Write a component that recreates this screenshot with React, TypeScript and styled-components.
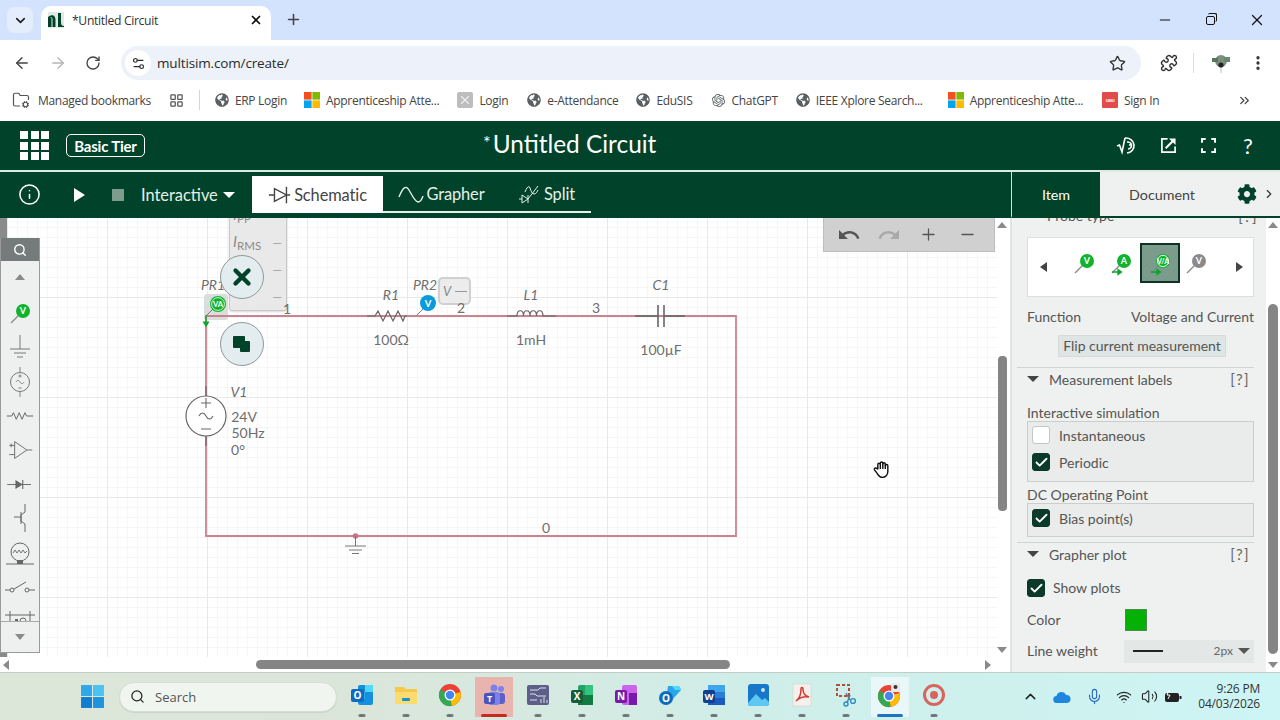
import React from 'react';
import styled, { createGlobalStyle } from 'styled-components';
import { ArrowLeft, ArrowRight, RotateCw, Star, Puzzle, EllipsisVertical, Minus, X, Plus, ChevronDown, ChevronUp, ChevronRight, Search, Settings2, LayoutGrid, FolderCog, ChevronsRight, Mic, Wifi, Volume2, Info, Check } from 'lucide-react';
import { FaGlobeAmericas, FaCog } from 'react-icons/fa';
import { SiOpenai } from 'react-icons/si';
import { MdUndo, MdRedo } from 'react-icons/md';

const GREEN = '#00432a';
const UI = `"Open Sans", "Noto Sans", sans-serif`;
const APP = `Lato, "Open Sans", sans-serif`;

const Global = createGlobalStyle`
  html, body { margin: 0; padding: 0; width: 1280px; height: 720px; overflow: hidden; background: #fff; }
  * { box-sizing: border-box; }
  #root { width: 1280px; height: 720px; }
`;

const Page = styled.div`
  width: 1280px; height: 720px; display: flex; flex-direction: column; overflow: hidden;
  font-family: ${APP}; color: #555;
`;

/* ---------- browser ---------- */
const TabStrip = styled.div`
  height: 40px; background: #d3e3fd; display: flex; align-items: flex-end; padding-left: 7px; color: #1f1f1f;
`;
const TabSearch = styled.div`
  width: 26px; height: 26px; margin-bottom: 7px; border-radius: 8px; background: #e4edfb;
  display: flex; align-items: center; justify-content: center;
`;
const BrowserTab = styled.div`
  width: 230px; height: 34px; margin-left: 8px; background: #fff; border-radius: 10px 10px 0 0;
  display: flex; align-items: center; padding: 0 8px 6px 7px; font: 12.2px ${UI}; color: #333;
`;
const TabTitle = styled.span` margin-left: 8px; flex: 1; letter-spacing: -0.35px; `;
const NewTab = styled.div` margin: 0 0 12px 14px; display: flex; `;
const WindowControls = styled.div`
  margin: 0 14px 11px auto; display: flex; gap: 32px; align-items: center;
`;
const Restore = styled.div`
  width: 9px; height: 9px; border: 1.3px solid #111; border-radius: 2px; position: relative; margin: 0 1px;
  &::after { content: ''; position: absolute; left: 1px; top: -3.5px; width: 8px; height: 8px;
    border-top: 1.3px solid #111; border-right: 1.3px solid #111; border-radius: 2px; }
`;
const Toolbar = styled.div`
  height: 40px; background: #fff; display: flex; align-items: center; padding: 6px 10px 0 13px; color: #444;
  border-radius: 8px 8px 0 0;
`;
const NavGroup = styled.div` display: flex; gap: 18px; align-items: center; `;
const Address = styled.div`
  margin-left: 20px; width: 1020px; height: 34px; border-radius: 17px; background: #edf2fa;
  display: flex; align-items: center; padding: 0 15px 0 3px; font: 13.5px ${UI}; color: #2a2a2a;
`;
const TuneBubble = styled.div`
  width: 26px; height: 26px; border-radius: 50%; background: #fff; display: flex; align-items: center; justify-content: center; margin-right: 6px; margin-left: 1px;
`;
const Url = styled.span` flex: 1; letter-spacing: -0.15px; `;
const ToolEnd = styled.div` display: flex; align-items: center; margin-left: 19px; `;
const Sep = styled.div` width: 1px; height: 20px; background: #d5dfeb; margin: 0 16px 0 15px; `;
const Avatar = styled.svg` width: 22px; height: 22px; margin-right: 17px; `;
const Bookmarks = styled.div`
  height: 40px; background: #fff; display: flex; align-items: center; padding-left: 12px; position: relative;
  font: 12px ${UI}; color: #444;
`;
const Bookmark = styled.div<{ $gap?: number; $icon?: number }>`
  display: flex; align-items: center; gap: ${p => p.$icon ?? 6}px; margin-right: ${p => p.$gap ?? 18}px; white-space: nowrap; letter-spacing: -0.3px;
`;
const BmSep = styled.div` width: 1px; height: 20px; background: #c9d6e4; margin: 0 15px 0 15px; `;
const BmMore = styled.div` margin-left: auto; margin-right: 28px; display: flex; `;
const SignInIcon = styled.div`
  width: 16px; height: 16px; background: #e34b4b; border-radius: 1px; color: #fff; font: bold 4px ${UI};
  display: flex; align-items: center; justify-content: center;
`;
const XFav = styled.div`
  width: 16px; height: 16px; background: #bdbdbd; border-radius: 2px; display: flex; align-items: center; justify-content: center; color: #eee;
`;

/* ---------- app bars ---------- */
const AppHeader = styled.header`
  height: 51px; background: ${GREEN}; color: #fff; display: flex; align-items: center; margin-top: 1px;
  border-bottom: 2px solid #dcebe3; padding: 0 20px; position: relative;
`;
const AppsGrid = styled.div`
  display: grid; grid-template-columns: repeat(3, 8px); grid-auto-rows: 8px; gap: 2.5px; width: 29px;
  & > i { background: #fff; display: block; }
`;
const TierBadge = styled.div`
  margin-left: 17px; height: 23px; width: 79px; border: 1.5px solid #fff; border-radius: 5px; font: 700 15px ${APP};
  display: flex; align-items: center; justify-content: center; letter-spacing: -0.2px;
`;
const CircuitTitle = styled.div`
  margin: 0 0 5px 338px; font: 24.4px ${APP}; white-space: nowrap;
  & > small { font-size: 18px; vertical-align: 4px; margin-right: 2px; }
`;
const HeaderIcons = styled.div`
  margin-left: auto; display: flex; align-items: center; gap: 16px; color: #fff; font: 22px ${APP}; padding-bottom: 1px;
`;
const HeaderIcon = styled.div` width: 24px; display: flex; justify-content: center; `;
const ModeBar = styled.div`
  height: 46px; display: flex; background: ${GREEN}; position: relative;
`;
const ModeLeft = styled.div`
  width: 1010px; display: flex; align-items: flex-start; color: #fff; padding-left: 18px;
  padding-top: 4px;
`;
const PlainBtn = styled.div<{ $ml: number }>`
  height: 37px; display: flex; align-items: center; margin-left: ${p => p.$ml}px;
`;
const PlayTri = styled.div`
  width: 0; height: 0; border-left: 11px solid #fff; border-top: 7.5px solid transparent; border-bottom: 7.5px solid transparent;
`;
const StopSq = styled.div` width: 12px; height: 12px; background: #7d9c8e; `;
const ModeSelect = styled.div`
  height: 37px; display: flex; align-items: center; gap: 5px; margin-left: 17px; font: 16.4px ${APP}; width: 111px;
  color: #e6efe9;
`;
const Caret = styled.div<{ $c?: string; $w?: number }>`
  width: 0; height: 0; border-left: ${p => p.$w ?? 6}px solid transparent; border-right: ${p => p.$w ?? 6}px solid transparent;
  border-top: ${p => (p.$w ?? 6) * 1.1}px solid ${p => p.$c ?? '#fff'};
`;
const ViewTabs = styled.div`
  display: flex; height: 37px; border-bottom: 2px solid #e9f0ec; width: 339px;
`;
const ViewTab = styled.div<{ $active?: boolean; $w: number }>`
  width: ${p => p.$w}px; height: ${p => p.$active ? 37 : 35}px; display: flex; align-items: center; justify-content: center; gap: 2px;
  background: ${p => p.$active ? '#fff' : 'transparent'}; color: ${p => p.$active ? '#444' : '#e6efe9'};
  font: 16.4px ${APP}; letter-spacing: -0.1px;
`;
const PanelTabs = styled.div`
  width: 269px; margin-left: 1px; height: 46px; background: #eef1f0; display: flex; align-items: center; border-bottom: 2px solid ${GREEN};
  border-left: 1px solid #d5e3dc; position: relative; color: #444;
`;
const PanelTab = styled.div<{ $active?: boolean; $w: number }>`
  width: ${p => p.$w}px; height: 100%; display: flex; align-items: center; justify-content: center; font: 14.3px ${APP};
  background: ${p => p.$active ? GREEN : 'transparent'}; color: ${p => p.$active ? '#fff' : '#444'};
`;
const GearArea = styled.div`
  margin-left: 13px; display: flex; align-items: center; gap: 5px; color: ${GREEN};
`;

/* ---------- workspace ---------- */
const Workspace = styled.div` flex: 1; display: flex; min-height: 0; background: #dfe5e2; `;
const CanvasArea = styled.div` width: 1010px; display: flex; flex-direction: column; background: #fff; `;
const CanvasRow = styled.div` flex: 1; display: flex; min-height: 0; `;
const Canvas = styled.div`
  width: 997px; position: relative; overflow: hidden;
  background-color: #fff;
  background-image:
    linear-gradient(to right, #e9e9e9 1px, transparent 1px),
    linear-gradient(to bottom, #e9e9e9 1px, transparent 1px),
    linear-gradient(to right, #f6f6f6 1px, transparent 1px),
    linear-gradient(to bottom, #f6f6f6 1px, transparent 1px);
  background-size: 100px 100px, 100px 100px, 10px 10px, 10px 10px;
  background-position: 7px 79px, 7px 79px, 7px 79px, 7px 79px;
`;
const Tri = styled.div<{ $dir: 'up' | 'down' | 'left' | 'right'; $s?: number; $c?: string }>`
  width: 0; height: 0; flex: none;
  ${p => {
    const s = p.$s ?? 5; const c = p.$c ?? '#8a8a8a'; const t = `${s}px solid transparent`; const f = `${s * 1.3}px solid ${c}`;
    if (p.$dir === 'up') return `border-left:${t};border-right:${t};border-bottom:${f};`;
    if (p.$dir === 'down') return `border-left:${t};border-right:${t};border-top:${f};`;
    if (p.$dir === 'left') return `border-top:${t};border-bottom:${t};border-right:${f};`;
    return `border-top:${t};border-bottom:${t};border-left:${f};`;
  }}
`;
const VScroll = styled.div`
  width: 13px; display: flex; flex-direction: column; align-items: center; padding: 4px 3px 4px 0;
`;
const VThumb = styled.div`
  width: 9px; height: 155px; margin-top: 128px; border-radius: 4px; background: #858585;
`;
const Push = styled.div` margin-top: auto; `;
const HScroll = styled.div`
  height: 15px; display: flex; align-items: center; padding: 0 19px 0 3px; background: #fff;
`;
const HThumb = styled.div`
  margin-left: 247px; width: 474px; height: 9px; border-radius: 4.5px; background: #858585; margin-right: auto;
`;
const Wires = styled.svg`
  position: absolute; left: 0; top: 0; width: 997px; height: 439px;
`;
const Label = styled.div<{ $x: number; $y: number; $it?: boolean; $s?: number }>`
  position: absolute; left: ${p => p.$x}px; top: ${p => p.$y - 219}px; transform: translate(-50%, -50%);
  font: ${p => p.$it ? 'italic' : 'normal'} ${p => p.$s ?? 14}px ${APP}; color: #6e6e6e; white-space: nowrap;
`;
const MeterCard = styled.div`
  position: absolute; left: 229px; top: -6px; width: 58px; height: 99px; background: #e9e9e9; border: 1px solid #c9c9c9; border-radius: 0 0 3px 3px;
  font: italic 15px ${APP}; color: #8a8a8a; display: flex; flex-direction: column; padding: 0 3px;
  box-shadow: 0 1px 2px rgba(0,0,0,.15);
`;
const MeterRow = styled.div`
  height: 27px; display: flex; align-items: center; justify-content: space-between;
  &:first-child { height: 16px; transform: translateY(-5px); }
  & > span { transform: translateY(-2px); }
  & > b { font-weight: 400; font-style: normal; font-size: 12px; color: #9a9a9a; padding-right: 1px; }
  & sub { font-style: normal; font-size: 11.5px; vertical-align: -3px; line-height: 0; }
`;
const RoundBtn = styled.div<{ $x: number; $y: number }>`
  position: absolute; left: ${p => p.$x - 22}px; top: ${p => p.$y - 218 - 22}px; width: 44px; height: 44px; border-radius: 50%;
  background: #e3edef; border: 1px solid #8f9a9a; display: flex; align-items: center; justify-content: center; color: ${GREEN};
`;
const Squares = styled.div`
  width: 12px; height: 12px; position: relative; background: ${GREEN}; border-radius: 1px; transform: translate(-3px, -2px);
  &::after { content: ''; position: absolute; left: 7px; top: 5px; width: 10px; height: 11px; background: ${GREEN}; border-radius: 1px; }
`;
const ProbeBox = styled.div`
  position: absolute; left: 438px; top: 59px; width: 33px; height: 28px; background: #ececec; border: 2px solid #d0d0d0; border-radius: 5px;
  font: italic 13px ${APP}; color: #8a8a8a; display: flex; align-items: center; padding-left: 3px; gap: 4px;
  & > i { width: 12px; height: 1px; background: #999; display: block; }
`;
const SelectHalo = styled.div`
  position: absolute; left: 204px; top: 76px; width: 24px; height: 26px; background: #d9dddb; border-radius: 3px;
`;
const UndoBar = styled.div`
  position: absolute; left: 823px; top: 0; width: 172px; height: 34px; background: #d0d0d0; border: 1px solid #bdbdbd; border-top: none;
  display: flex; align-items: center; gap: 15.5px; padding-left: 13px; color: #555;
`;
const UndoSlot = styled.div<{ $dim?: boolean }>` width: 24px; display: flex; justify-content: center; color: ${p => p.$dim ? '#a9a9a9' : '#555'}; `;
const Palette = styled.aside`
  position: absolute; left: 0; top: 20px; width: 40px; height: 415px; background: #eef0f0; border: 1px solid #9a9a9a; border-left-width: 1px; border-top: none;
  display: flex; flex-direction: column; overflow: hidden;
`;
const PaletteSearch = styled.div`
  height: 23px; background: #757b7b; color: #fff; display: flex; align-items: center; justify-content: center; flex: none;
`;
const PaletteUp = styled.div` height: 32px; display: flex; align-items: center; justify-content: center; flex: none; `;
const PaletteList = styled.div`
  height: 328px; flex: none; overflow: hidden; display: flex; flex-direction: column; align-items: center; padding-top: 2px;
`;
const PaletteItem = styled.div<{ $h: number }>`
  height: ${p => p.$h}px; flex: none; display: flex; align-items: center; justify-content: center; width: 100%;
`;
const PaletteDown = styled.div`
  flex: 1; display: flex; align-items: center; justify-content: center; border-top: 1px solid #aaa; background: #eef0f0;
`;
const EdgeStrip = styled.div<{ $top: number; $h: number }>`
  position: absolute; left: 0; top: ${p => p.$top}px; width: 7px; height: ${p => p.$h}px; background: #8a8a8a;
`;
const HandCursor = styled.div` position: absolute; left: 872px; top: 241px; display: flex; `;

/* ---------- side panel ---------- */
const Panel = styled.div`
  width: 268px; margin-left: 2px; background: #eef1f0; display: flex; position: relative;
`;
const PanelBody = styled.div`
  width: 254px; padding: 0 0 0 15px; overflow: hidden; font: 14px ${APP}; color: #555;
`;
const PanelScroll = styled.div`
  width: 14px; background: #fff; display: flex; flex-direction: column; align-items: center; padding: 4px 1px 4px 1px;
`;
const PanelThumb = styled.div` width: 10px; height: 350px; margin-top: 76px; border-radius: 5px; background: #858585; `;
const ProbeHeading = styled.div`
  height: 16px; margin: -10px 8px 0 20px; display: flex; justify-content: space-between; line-height: 16px;
`;
const Carousel = styled.div`
  width: 227px; height: 60px; margin-top: 13px; background: #fff; border: 1px solid #dcdfde; display: flex; align-items: center; padding: 0 10px 0 12px;
`;
const CarouselCell = styled.div<{ $sel?: boolean; $ml?: number }>`
  width: 40px; height: 40px; display: flex; align-items: center; justify-content: center; flex: none; margin: -8px 0 0 ${p => p.$ml ?? 0}px;
  ${p => p.$sel ? `background:#7b9b8c;border:2px solid #0e3325;` : ''}
`;
const CarouselEnd = styled.div` margin-left: auto; display: flex; `;
const PropRow = styled.div<{ $mt: number }>`
  width: 227px; margin-top: ${p => p.$mt}px; height: 18px; display: flex; justify-content: space-between; align-items: center; line-height: 18px;
  white-space: nowrap;
`;
const FlipBtn = styled.div`
  width: 168px; height: 22px; margin: 9px 0 0 31px; background: #dfe5e4; border: 1px solid #d5dbda; display: flex; align-items: center; justify-content: center; border-radius: 1px; padding-bottom: 2px;
`;
const SectionHead = styled.div<{ $mt: number }>`
  margin: ${p => p.$mt}px 0 0 -10px; width: 237px; border-top: 1px solid #cfd5d3; display: flex; align-items: center; padding: 0 4px 2px 10px; height: 25px;
`;
const SectionTitle = styled.span` margin-left: 10px; flex: 1; `;
const Help = styled.span` font-size: 15px; color: #666; letter-spacing: 1.3px; `;
const CheckGroup = styled.div<{ $h: number; $pt: number }>`
  width: 227px; height: ${p => p.$h}px; background: #e9eceb; border: 1px solid #c9cecd; display: flex; flex-direction: column; gap: 7px; padding: ${p => p.$pt}px 0 0 4px;
`;
const CheckRow = styled.div<{ $gap?: number }>` display: flex; align-items: center; gap: ${p => p.$gap ?? 9}px; height: 20px; white-space: nowrap; `;
const CheckBox = styled.div<{ $on?: boolean }>`
  width: 18px; height: 18px; border-radius: 3px; flex: none; display: flex; align-items: center; justify-content: center;
  background: ${p => p.$on ? '#0b3a2a' : '#fff'}; border: 1px solid ${p => p.$on ? '#0b3a2a' : '#c2c6c5'}; color: #fff;
`;
const CapLabel = styled.div<{ $mt: number }>` margin-top: ${p => p.$mt}px; height: 16px; line-height: 16px; white-space: nowrap; `;
const Swatch = styled.div` width: 22px; height: 22px; background: #06b106; border: 1px solid #4a8a4a; margin-right: 107px; `;
const WeightSelect = styled.div`
  width: 130px; height: 23px; background: #e3e7e6; display: flex; align-items: center; padding: 0 4px 0 9px; font-size: 12px; color: #666; gap: 5px;
  & > i { width: 30px; height: 2px; background: #222; display: block; margin-right: auto; }
`;

/* ---------- taskbar ---------- */
const Taskbar = styled.footer`
  height: 48px; flex: none; display: flex; align-items: center; position: relative;
  background: linear-gradient(90deg, #dce6d9 0%, #dbe6da 28%, #cfeee9 60%, #cdf5f5 100%);
  border-top: 1px solid #c3ccc5; padding-left: 80px;
`;
const StartBtn = styled.svg` width: 25px; height: 25px; flex: none; `;
const SearchPill = styled.div`
  width: 218px; height: 30px; margin-left: 14px; border-radius: 15px; background: #f0f6ef; border: 1px solid #d5dcd5; display: flex; align-items: center; gap: 10px; padding-left: 10px;
  font: 13px ${UI}; color: #555; box-shadow: 0 1px 1px rgba(0,0,0,.08);
`;
const TaskApps = styled.div` display: flex; margin-left: 3px; `;
const TaskApp = styled.div<{ $bg?: string; $bar?: string }>`
  width: 44px; height: 40px; display: flex; align-items: center; justify-content: center; position: relative; padding-bottom: 3px;
  background: ${p => p.$bg ? `linear-gradient(${p.$bg}, ${p.$bg}) center / 38px 100% no-repeat` : 'transparent'};
  &::after { content: ''; position: absolute; left: 50%; bottom: 0; transform: translateX(-50%);
    width: ${p => p.$bar ? '26px' : '7px'}; height: 3px; border-radius: 2px; background: ${p => p.$bar ?? '#70787a'}; }
`;
const Tray = styled.div` margin-left: auto; display: flex; align-items: center; color: #222; padding-right: 20px; `;
const TrayIcon = styled.div<{ $w: number }>` width: ${p => p.$w}px; display: flex; justify-content: center; `;
const Clock = styled.div`
  margin: -2px 0 0 12px; text-align: right; font: 12px/15px ${UI}; letter-spacing: -0.2px; color: #333;
`;

/* ---------- drawings ---------- */
const MsLogo = () => (
  <svg width="16" height="16" viewBox="0 0 16 16"><rect width="7.6" height="7.6" fill="#f25022"/><rect x="8.4" width="7.6" height="7.6" fill="#7fba00"/><rect y="8.4" width="7.6" height="7.6" fill="#00a4ef"/><rect x="8.4" y="8.4" width="7.6" height="7.6" fill="#ffb900"/></svg>
);
const Globe = () => <FaGlobeAmericas size={14} color="#5a5f63" />;
const NiLogo = () => (
  <svg width="16" height="16" viewBox="0 0 16 16"><rect width="16" height="16" fill="#dfeae4"/><path d="M0 6h3.5v9H0zM0 5c4-3 7.5-2 7.5 3v7H4.5V7C4.5 5 2.5 5 0 7zM10 1h3v14h-3z" fill="#00432a"/><path d="M13 10c0 3 1 4 3 4v1h-3z" fill="#00432a"/></svg>
);
const ProbeGlyph = ({ fill, letter, arrow, ring }: { fill: string; letter: string; arrow?: boolean; ring?: boolean }) => (
  <svg width="26" height="26" viewBox="0 0 26 26">
    <line x1="4" y1="23" x2="12" y2="15" stroke="#888" strokeWidth="1.2" />
    <circle cx="16" cy="11" r="7" fill={fill} />
    {ring && <circle cx="16" cy="11" r="5.6" fill="none" stroke="#fff" strokeWidth="0.9" />}
    <text x="16" y="14" textAnchor="middle" fontFamily="Lato" fontWeight="700" fontSize={ring ? 7 : 9} fill="#fff">{letter}</text>
    {arrow && <path d="M4 22h9M10 19.5l3.5 2.5-3.5 2.5z" stroke="#0aa52c" strokeWidth="1.3" fill="#0aa52c" />}
  </svg>
);
const Resistor = () => <svg width="28" height="10" viewBox="0 0 34 12"><path d="M1 6h6l2-4 3.5 8 3.5-8 3.5 8 3.5-8 2 4h8" fill="none" stroke="#666" strokeWidth="1.2"/></svg>;
const OpAmp = () => <svg width="26" height="24" viewBox="0 0 34 30"><path d="M10 4v22l16-11zM26 15h7M3 9h7M3 21h7M5.5 6.5v5" fill="none" stroke="#666" strokeWidth="1.2"/></svg>;
const Diode = () => <svg width="28" height="11" viewBox="0 0 30 12"><path d="M1 6h26" stroke="#666" strokeWidth="1"/><path d="M10 1v10l8-5z" fill="#666"/><path d="M18 1v10" stroke="#666" strokeWidth="1.2"/></svg>;
const Bjt = () => <svg width="14" height="30" viewBox="0 0 14 30"><path d="M1 14h7M12 1v8l-4 3v6l4 3v8M8 9v12" fill="none" stroke="#666" strokeWidth="1"/></svg>;
const Lamp = () => <svg width="30" height="24" viewBox="0 0 30 24"><circle cx="15" cy="10" r="9" fill="none" stroke="#666" strokeWidth="1"/><path d="M8 11l2-3 2 3 2-3 2 3 2-3 2 3 2-2" fill="none" stroke="#666" strokeWidth="0.9"/><path d="M1 22h28" stroke="#666" strokeWidth="1"/><rect x="12" y="18" width="6" height="4" fill="#666"/></svg>;
const Switch = () => <svg width="30" height="14" viewBox="0 0 30 14"><path d="M0 10h5M9 9l12-7M24 10h6" stroke="#666" strokeWidth="1" fill="none"/><circle cx="7" cy="10" r="2" fill="none" stroke="#666"/><circle cx="22" cy="10" r="2" fill="none" stroke="#666"/></svg>;
const Relay = () => <svg width="30" height="14" viewBox="0 0 30 14"><path d="M0 4h30M5 0v14M25 0v14" stroke="#666" strokeWidth="1" fill="none"/><circle cx="18" cy="10" r="3" fill="none" stroke="#666"/><rect x="10" y="8" width="3" height="3" fill="#666"/></svg>;
const GroundSym = () => <svg width="22" height="26" viewBox="0 0 22 26"><path d="M11 0v14M1 14h20M5 18h12M8 22h6" stroke="#777" strokeWidth="1" fill="none"/></svg>;
const SourceSym = () => <svg width="22" height="30" viewBox="0 0 22 30"><circle cx="11" cy="15" r="9.5" fill="none" stroke="#777"/><path d="M11 0v5.5M11 24.5V30M7 15c1.4-2.2 2.8-2.2 4 0s2.6 2.2 4 0M9.4 9h3.2M11 7.4v3.2M9.4 21h3.2" stroke="#777" strokeWidth="0.9" fill="none"/></svg>;

const Circuit = () => (
  <Wires viewBox="0 218 997 439">
    <path d="M206 316H736V536H206Z" fill="none" stroke="#c9848f" strokeWidth="1.8" />
    {/* R1 */}
    <path d="M367 316h8l3-5 5 10 5-10 5 10 5-10 5 10 2-5h2" fill="none" stroke="#666" strokeWidth="1.2" />
    <line x1="417" y1="315" x2="423" y2="309" stroke="#777" strokeWidth="1" />
    <circle cx="428" cy="303" r="8" fill="#0a9bdc" />
    <text x="428" y="307" textAnchor="middle" fontFamily="Lato" fontSize="9.5" fontWeight="700" fill="#fff">V</text>
    {/* L1 */}
    <path d="M507 316h10c0-7 6.5-7 6.5 0 0-7 6.5-7 6.5 0 0-7 6.5-7 6.5 0 0-7 6.5-7 6.5 0h13" fill="none" stroke="#666" strokeWidth="1.2" />
    {/* C1 */}
    <path d="M635 316h23M664 316h21M658 305v22M664 305v22" fill="none" stroke="#666" strokeWidth="1.6" />
    {/* V1 */}
    <circle cx="206" cy="416" r="20" fill="#fff" stroke="#666" strokeWidth="1.2" />
    <path d="M206 386v10M206 436v10" stroke="#666" strokeWidth="1.2" />
    <path d="M201 403h10M206 398v10M201 429h10M199 416c2-4 5-4 7 0s5 4 7 0" fill="none" stroke="#666" strokeWidth="1.1" />
    {/* ground */}
    <circle cx="355.5" cy="536" r="2.8" fill="#c9748a" />
    <path d="M355.5 536v10M345 546h21M349 550h13M352 553.5h7" stroke="#777" strokeWidth="1" fill="none" />
    {/* PR1 */}
    <line x1="206" y1="316" x2="213" y2="309" stroke="#777" strokeWidth="1" />
    <path d="M206 316v7" stroke="#10a52b" strokeWidth="1.4" />
    <path d="M202.5 321.5h7l-3.5 6z" fill="#10a52b" />
    <circle cx="218" cy="304" r="8" fill="#0fb32d" />
    <circle cx="218" cy="304" r="6.4" fill="none" stroke="#fff" strokeWidth="0.8" />
    <text x="218" y="307" textAnchor="middle" fontFamily="Lato" fontSize="7.5" fontWeight="700" fill="#fff">VA</text>
  </Wires>
);

const TaskIcons = [
  <svg width="24" height="24" viewBox="0 0 24 24" key="o"><rect x="8" y="2" width="15" height="20" rx="2" fill="#1490df"/><rect x="15" y="2" width="8" height="7" fill="#50d9ff"/><rect x="8" y="9" width="7" height="7" fill="#28a8ea"/><rect x="1" y="6" width="13" height="13" rx="2" fill="#0f6cbd"/><text x="7.5" y="16" textAnchor="middle" fill="#fff" fontSize="10" fontWeight="700" fontFamily="Open Sans">O</text></svg>,
  <svg width="24" height="24" viewBox="0 0 24 24" key="f"><path d="M1 4h9l2 2h11v15H1z" fill="#f7c948"/><path d="M1 9h22v12H1z" fill="#fcdc6e"/><rect x="8" y="15" width="8" height="3" rx="1" fill="#1490df"/></svg>,
  <svg width="24" height="24" viewBox="0 0 24 24" key="c"><circle cx="12" cy="12" r="11" fill="#ea4335"/><path d="M12 12L22.5 9a11 11 0 0 1-9 14z" fill="#fbbc04"/><path d="M12 12L13.5 23A11 11 0 0 1 2.5 6.5z" fill="#34a853"/><circle cx="12" cy="12" r="5.5" fill="#fff"/><circle cx="12" cy="12" r="4.2" fill="#4285f4"/></svg>,
  <svg width="24" height="24" viewBox="0 0 24 24" key="t"><circle cx="19" cy="6" r="3" fill="#7b83eb"/><circle cx="12" cy="5" r="3.5" fill="#7b83eb"/><rect x="15" y="10" width="8" height="11" rx="3" fill="#5b5fc7"/><rect x="6" y="9" width="12" height="13" rx="3" fill="#7b83eb"/><rect x="2" y="10" width="11" height="11" rx="2" fill="#4b53bc"/><text x="7.5" y="19" textAnchor="middle" fill="#fff" fontSize="9" fontWeight="700" fontFamily="Open Sans">T</text></svg>,
  <svg width="24" height="24" viewBox="0 0 24 24" key="cb"><rect x="1" y="2" width="22" height="20" rx="2" fill="#5c5f87"/><path d="M4 7h8l2-2h6M4 11h5l2 2h9M4 17h7M15 20v-4M18 20v-6M21 20v-3" stroke="#dfe0ea" strokeWidth="1" fill="none"/></svg>,
  <svg width="24" height="24" viewBox="0 0 24 24" key="x"><rect x="8" y="2" width="15" height="20" rx="2" fill="#21a366"/><rect x="15" y="2" width="8" height="10" fill="#33c481"/><rect x="8" y="12" width="15" height="10" fill="#107c41"/><rect x="1" y="7" width="12" height="13" rx="2" fill="#185c37"/><text x="7" y="17" textAnchor="middle" fill="#fff" fontSize="10" fontWeight="700" fontFamily="Open Sans">X</text></svg>,
  <svg width="24" height="24" viewBox="0 0 24 24" key="n"><rect x="8" y="2" width="15" height="20" rx="2" fill="#ca64ea"/><rect x="15" y="10" width="8" height="12" fill="#7719aa"/><rect x="1" y="7" width="12" height="13" rx="2" fill="#7719aa"/><text x="7" y="17" textAnchor="middle" fill="#fff" fontSize="10" fontWeight="700" fontFamily="Open Sans">N</text></svg>,
  <svg width="24" height="24" viewBox="0 0 24 24" key="o2"><path d="M10 3h11l2 4-9 10H8z" fill="#28a8ea"/><path d="M14 3h7l2 4h-6z" fill="#50d9ff"/><circle cx="8" cy="15" r="7" fill="#0f6cbd"/><text x="8" y="19" textAnchor="middle" fill="#fff" fontSize="10" fontWeight="700" fontFamily="Open Sans">O</text></svg>,
  <svg width="24" height="24" viewBox="0 0 24 24" key="w"><rect x="6" y="2" width="17" height="20" rx="2" fill="#2b7cd3"/><rect x="6" y="2" width="17" height="7" fill="#41a5ee"/><rect x="6" y="15" width="17" height="7" fill="#185abd"/><rect x="1" y="7" width="12" height="13" rx="2" fill="#103f91"/><text x="7" y="17" textAnchor="middle" fill="#fff" fontSize="9.5" fontWeight="700" fontFamily="Open Sans">W</text></svg>,
  <svg width="24" height="24" viewBox="0 0 24 24" key="p"><rect x="2" y="1" width="21" height="22" rx="3" fill="#1877c9"/><path d="M2 20l8-9 6 6 3-2 4 4v1a3 3 0 0 1-3 3H5a3 3 0 0 1-3-3z" fill="#5ec8f2"/><circle cx="17" cy="7" r="2" fill="#bfe9fb"/></svg>,
  <svg width="24" height="24" viewBox="0 0 24 24" key="pdf"><rect x="3" y="1" width="18" height="22" fill="#f5f0ee" stroke="#d8d0cc" strokeWidth="0.6"/><path d="M6 18c3-2 5-7 5-12 0-2 2-2 2 0 0 5 2 7 6 8-5-1-9 0-13 4z" fill="none" stroke="#d13a2a" strokeWidth="1.5"/></svg>,
  <svg width="24" height="24" viewBox="0 0 24 24" key="s"><rect x="3" y="2" width="12" height="11" fill="none" stroke="#b84a3a" strokeWidth="2" strokeDasharray="3 2"/><path d="M12 10l4 7M16 12l-3 8" stroke="#4e7f9a" strokeWidth="1.5"/><circle cx="19" cy="18" r="2.4" fill="none" stroke="#2e8cc0" strokeWidth="1.4"/><circle cx="12" cy="21" r="2" fill="none" stroke="#2e8cc0" strokeWidth="1.4"/></svg>,
  <svg width="26" height="26" viewBox="0 0 26 26" key="c2"><circle cx="12" cy="14" r="11" fill="#ea4335"/><path d="M12 14L22.5 11a11 11 0 0 1-9 14z" fill="#fbbc04"/><path d="M12 14L13.5 25A11 11 0 0 1 2.5 8.5z" fill="#34a853"/><circle cx="12" cy="14" r="5.5" fill="#fff"/><circle cx="12" cy="14" r="4.2" fill="#4285f4"/><rect x="14" y="1" width="9" height="9" rx="1.5" fill="#e9e9e9"/><circle cx="18.5" cy="5" r="2" fill="#333"/></svg>,
  <svg width="24" height="24" viewBox="0 0 24 24" key="r"><circle cx="12" cy="12" r="9.5" fill="none" stroke="#d9645f" strokeWidth="3"/><circle cx="12" cy="12" r="4" fill="#d9645f"/></svg>,
];

const palette: [number, React.ReactNode][] = [
  [36, <ProbeGlyph fill="#0fb32d" letter="V" />],
  [34, <GroundSym />],
  [34, <SourceSym />],
  [34, <Resistor />],
  [34, <OpAmp />],
  [34, <Diode />],
  [34, <Bjt />],
  [38, <Lamp />],
  [27, <Switch />],
  [36, <Relay />],
];

export default function App() {
  return (
    <Page>
      <Global />
      <TabStrip>
        <TabSearch><ChevronDown size={15} strokeWidth={2.6} /></TabSearch>
        <BrowserTab>
          <NiLogo />
          <TabTitle>*Untitled Circuit</TabTitle>
          <X size={14} strokeWidth={3} color="#111" />
        </BrowserTab>
        <NewTab><Plus size={17} strokeWidth={2.2} color="#444" /></NewTab>
        <WindowControls>
          <Minus size={16} strokeWidth={1.6} color="#111" />
          <Restore />
          <X size={18} strokeWidth={1.6} color="#111" />
        </WindowControls>
      </TabStrip>
      <Toolbar>
        <NavGroup>
          <ArrowLeft size={18} strokeWidth={1.9} />
          <ArrowRight size={18} strokeWidth={1.7} color="#b2b5b8" />
          <RotateCw size={16} strokeWidth={2} />
        </NavGroup>
        <Address>
          <TuneBubble><Settings2 size={15} strokeWidth={1.9} /></TuneBubble>
          <Url>multisim.com/create/</Url>
          <Star size={17} strokeWidth={1.9} color="#333" />
        </Address>
        <ToolEnd>
          <Puzzle size={18} strokeWidth={1.9} color="#333" />
          <Sep />
          <Avatar viewBox="0 0 22 22">
            <circle cx="11" cy="9" r="6" fill="#79917e" /><rect x="2" y="6" width="6" height="4" fill="#55775d" /><rect x="14" y="5" width="6" height="5" fill="#6b8770" /><circle cx="11" cy="13" r="2.6" fill="#222" /><path d="M11 16v5" stroke="#bbb" />
          </Avatar>
          <EllipsisVertical size={18} strokeWidth={2.4} color="#333" />
        </ToolEnd>
      </Toolbar>
      <Bookmarks>
        <Bookmark $gap={18} $icon={8}><FolderCog size={18} strokeWidth={1.6} color="#555" /> Managed bookmarks</Bookmark>
        <LayoutGrid size={15} strokeWidth={2} color="#555" />
        <BmSep />
        <Bookmark $gap={17}><Globe /> ERP Login</Bookmark>
        <Bookmark><MsLogo /> Apprenticeship Atte...</Bookmark>
        <Bookmark $gap={19}><XFav><X size={14} /></XFav> Login</Bookmark>
        <Bookmark><Globe /> e-Attendance</Bookmark>
        <Bookmark $gap={20}><Globe /> EduSIS</Bookmark>
        <Bookmark><SiOpenai size={13} color="#5a5f63" /> ChatGPT</Bookmark>
        <Bookmark $gap={25}><Globe /> IEEE Xplore Search...</Bookmark>
        <Bookmark $gap={19}><MsLogo /> Apprenticeship Atte...</Bookmark>
        <Bookmark><SignInIcon>UMU</SignInIcon> Sign In</Bookmark>
        <BmMore><ChevronsRight size={15} strokeWidth={2} color="#444" /></BmMore>
      </Bookmarks>

      <AppHeader>
        <AppsGrid>{Array.from({ length: 9 }, (_, i) => <i key={i} />)}</AppsGrid>
        <TierBadge>Basic Tier</TierBadge>
        <CircuitTitle><small>*</small>Untitled Circuit</CircuitTitle>
        <HeaderIcons>
          <HeaderIcon>
            <svg width="24" height="22" viewBox="0 0 24 22" fill="none" stroke="#fff" strokeWidth="1.6"><path d="M1 12l2.5-1 2.5 7 3-14" /><path d="M9 4a8 7.5 0 1 1 2 15M11 8a4 3.5 0 1 1 1 7M13 11h2" /></svg>
          </HeaderIcon>
          <HeaderIcon>
            <svg width="17" height="17" viewBox="0 0 18 18" fill="none" stroke="#fff" strokeWidth="1.8"><path d="M8 2H2v14h14v-6" /><path d="M6 12l9-9" strokeWidth="2.2" /><path d="M9.5 1.5h7v7z" fill="#fff" strokeWidth="0" /></svg>
          </HeaderIcon>
          <HeaderIcon>
            <svg width="15" height="15" viewBox="0 0 16 16" fill="none" stroke="#fff" strokeWidth="2.2"><path d="M1 5V1h4M11 1h4v4M15 11v4h-4M5 15H1v-4" /></svg>
          </HeaderIcon>
          <HeaderIcon>?</HeaderIcon>
        </HeaderIcons>
      </AppHeader>

      <ModeBar>
        <ModeLeft>
          <PlainBtn $ml={0}><Info size={23} strokeWidth={1.6} /></PlainBtn>
          <PlainBtn $ml={33}><PlayTri /></PlainBtn>
          <PlainBtn $ml={27}><StopSq /></PlainBtn>
          <ModeSelect>Interactive <Caret /></ModeSelect>
          <ViewTabs>
            <ViewTab $active $w={131}>
              <svg width="24" height="20" viewBox="0 0 26 20" fill="none" stroke="#444" strokeWidth="1.5"><path d="M1 10h6M7 3v14l13-7zM20 1v18M20 10h4" /></svg>
              Schematic
            </ViewTab>
            <ViewTab $w={117}>
              <svg width="26" height="20" viewBox="0 0 26 20" fill="none" stroke="#e6efe9" strokeWidth="1.4"><path d="M1 13C5 3 8 1 11 6s6 12 9 12 4-3 5-6" /></svg>
              Grapher
            </ViewTab>
            <ViewTab $w={91}>
              <svg width="26" height="20" viewBox="0 0 26 20" fill="none" stroke="#e6efe9" strokeWidth="1"><path d="M3 15h3M6 11v8l6-4zM12 11v8M12 15l10-13" /><path d="M9 8c2-5 4-7 5-4s2 6 4 6 3-2 4-4" /></svg>
              Split
            </ViewTab>
          </ViewTabs>
        </ModeLeft>
        <PanelTabs>
          <PanelTab $active $w={88}>Item</PanelTab>
          <PanelTab $w={124}>Document</PanelTab>
          <GearArea><FaCog size={20} /><ChevronRight size={14} strokeWidth={2} color="#333" /></GearArea>
        </PanelTabs>
      </ModeBar>

      <Workspace>
        <CanvasArea>
          <CanvasRow>
            <Canvas>
              <MeterCard>
                <MeterRow><span>I<sub>PP</sub></span></MeterRow>
                <MeterRow><span>I<sub>RMS</sub></span><b>—</b></MeterRow>
                <MeterRow><i /><b>—</b></MeterRow>
                <MeterRow><i /><b>—</b></MeterRow>
              </MeterCard>
              <SelectHalo />
              <Label $x={213} $y={285} $it>PR1</Label>
              <Circuit />
              <RoundBtn $x={242} $y={277}><X size={26} strokeWidth={4} /></RoundBtn>
              <RoundBtn $x={242} $y={344}><Squares /></RoundBtn>
              <ProbeBox>V<i /></ProbeBox>
              <Label $x={287} $y={309}>1</Label>
              <Label $x={391} $y={295} $it>R1</Label>
              <Label $x={391} $y={340}>100Ω</Label>
              <Label $x={425} $y={285} $it>PR2</Label>
              <Label $x={461} $y={308}>2</Label>
              <Label $x={531} $y={295} $it>L1</Label>
              <Label $x={531} $y={340}>1mH</Label>
              <Label $x={596} $y={308}>3</Label>
              <Label $x={661} $y={285} $it>C1</Label>
              <Label $x={661} $y={350}>100µF</Label>
              <Label $x={239} $y={392} $it>V1</Label>
              <Label $x={244} $y={417}>24V</Label>
              <Label $x={248} $y={433}>50Hz</Label>
              <Label $x={238} $y={450}>0°</Label>
              <Label $x={546} $y={528}>0</Label>
              <UndoBar>
                <UndoSlot><MdUndo size={24} /></UndoSlot>
                <UndoSlot $dim><MdRedo size={24} /></UndoSlot>
                <UndoSlot><Plus size={19} strokeWidth={1.6} /></UndoSlot>
                <UndoSlot><Minus size={19} strokeWidth={1.6} /></UndoSlot>
              </UndoBar>
              <EdgeStrip $top={0} $h={20} />
              <EdgeStrip $top={435} $h={4} />
              <Palette>
                <PaletteSearch><Search size={14} strokeWidth={2.4} /></PaletteSearch>
                <PaletteUp><Tri $dir="up" /></PaletteUp>
                <PaletteList>
                  {palette.map(([h, g], i) => <PaletteItem key={i} $h={h}>{g}</PaletteItem>)}
                </PaletteList>
                <PaletteDown><Tri $dir="down" /></PaletteDown>
              </Palette>
              <HandCursor>
                <svg width="20" height="20" viewBox="0 0 24 24" fill="#fff" stroke="#111" strokeWidth="1.7" strokeLinejoin="round"><path d="M7 12V6.5a1.5 1.5 0 0 1 3 0V5a1.5 1.5 0 0 1 3 0v1a1.5 1.5 0 0 1 3 0v2a1.5 1.5 0 0 1 3 0v7c0 4-3 7-6.5 7S8 20 6 17l-3-4c-1-2 1.5-3 3-1.5z" /><path d="M10 6.5V12M13 5v7M16 7v5" fill="none" /></svg>
              </HandCursor>
            </Canvas>
            <VScroll>
              <Tri $dir="up" />
              <VThumb />
              <Push><Tri $dir="down" /></Push>
            </VScroll>
          </CanvasRow>
          <HScroll>
            <Tri $dir="left" />
            <HThumb />
            <Tri $dir="right" />
          </HScroll>
        </CanvasArea>

        <Panel>
          <PanelBody>
            <ProbeHeading><span>Probe type</span><Help>[?]</Help></ProbeHeading>
            <Carousel>
              <Tri $dir="left" $c="#444" $s={5.5} />
              <CarouselCell $ml={17}><ProbeGlyph fill="#0fb32d" letter="V" /></CarouselCell>
              <CarouselCell $ml={-3}><ProbeGlyph fill="#0fb32d" letter="A" arrow /></CarouselCell>
              <CarouselCell $sel $ml={-1}><ProbeGlyph fill="#0fb32d" letter="V/A" arrow ring /></CarouselCell>
              <CarouselCell $ml={-4}><ProbeGlyph fill="#8a8a8a" letter="V" /></CarouselCell>
              <CarouselEnd><Tri $dir="right" $c="#444" $s={5.5} /></CarouselEnd>
            </Carousel>
            <PropRow $mt={11}><span>Function</span><span>Voltage and Current</span></PropRow>
            <FlipBtn>Flip current measurement</FlipBtn>
            <SectionHead $mt={10}><Caret $c="#444" /><SectionTitle>Measurement labels</SectionTitle><Help>[?]</Help></SectionHead>
            <CapLabel $mt={13}>Interactive simulation</CapLabel>
            <CheckGroup $h={61} $pt={3}>
              <CheckRow><CheckBox /> Instantaneous</CheckRow>
              <CheckRow><CheckBox $on><Check size={15} strokeWidth={3} /></CheckBox> Periodic</CheckRow>
            </CheckGroup>
            <CapLabel $mt={5}>DC Operating Point</CapLabel>
            <CheckGroup $h={34} $pt={4}>
              <CheckRow><CheckBox $on><Check size={15} strokeWidth={3} /></CheckBox> Bias point(s)</CheckRow>
            </CheckGroup>
            <SectionHead $mt={5}><Caret $c="#444" /><SectionTitle>Grapher plot</SectionTitle><Help>[?]</Help></SectionHead>
            <PropRow $mt={12}><CheckRow $gap={8}><CheckBox $on><Check size={15} strokeWidth={3} /></CheckBox> Show plots</CheckRow></PropRow>
            <PropRow $mt={14}><span>Color</span><Swatch /></PropRow>
            <PropRow $mt={13}><span>Line weight</span><WeightSelect><i />2px <Caret $c="#555" /></WeightSelect></PropRow>
          </PanelBody>
          <PanelScroll>
            <Tri $dir="up" />
            <PanelThumb />
            <Push><Tri $dir="down" /></Push>
          </PanelScroll>
        </Panel>
      </Workspace>

      <Taskbar>
        <StartBtn viewBox="0 0 24 24">
          <rect x="1" y="1" width="10.5" height="10.5" fill="#2fa8ea" /><rect x="12.5" y="1" width="10.5" height="10.5" fill="#4cc2f1" /><rect x="1" y="12.5" width="10.5" height="10.5" fill="#0f7ed0" /><rect x="12.5" y="12.5" width="10.5" height="10.5" fill="#1e93de" />
        </StartBtn>
        <SearchPill><Search size={15} strokeWidth={2} color="#222" /> Search</SearchPill>
        <TaskApps>
          {TaskIcons.map((ic, i) => (
            <TaskApp key={i} $bg={i === 3 ? '#e9b4ad' : i === 12 ? '#eaf7f8' : undefined} $bar={i === 3 ? '#c42b1c' : i === 12 ? '#1f73c4' : undefined}>{ic}</TaskApp>
          ))}
        </TaskApps>
        <Tray>
          <TrayIcon $w={32}><ChevronUp size={17} strokeWidth={2} /></TrayIcon>
          <TrayIcon $w={32}>
            <svg width="18" height="12" viewBox="0 0 18 12"><path d="M4 12a3.5 3.5 0 0 1-.5-7A5 5 0 0 1 13 4a4 4 0 0 1 1 8z" fill="#1f86e0" /></svg>
          </TrayIcon>
          <TrayIcon $w={32}><Mic size={17} strokeWidth={1.6} color="#2a6cc4" /></TrayIcon>
          <TrayIcon $w={28}><Wifi size={16} strokeWidth={1.8} /></TrayIcon>
          <TrayIcon $w={22}><Volume2 size={17} strokeWidth={1.5} /></TrayIcon>
          <TrayIcon $w={26}>
            <svg width="18" height="14" viewBox="0 0 18 14"><rect x="1" y="3" width="14" height="9" rx="2" fill="#222" /><rect x="15.5" y="6" width="2" height="3" fill="#222" /><path d="M5 0L3 5h3L4 9" stroke="#fff" strokeWidth="1" fill="none" /></svg>
          </TrayIcon>
          <Clock>9:26 PM<br />04/03/2026</Clock>
        </Tray>
      </Taskbar>
    </Page>
  );
}
